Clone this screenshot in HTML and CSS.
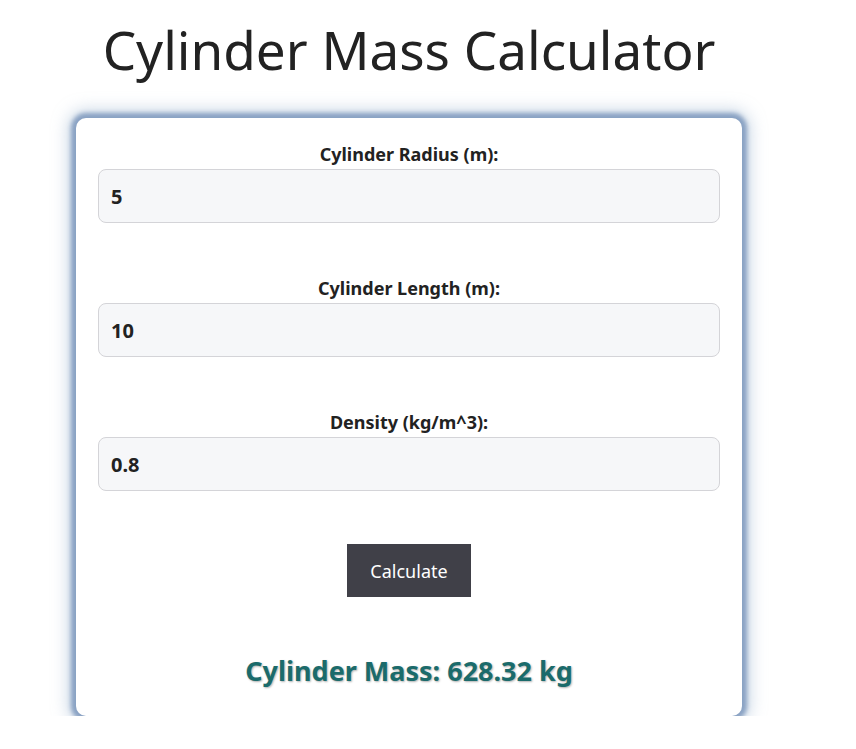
FILE: index.html
```html
<!DOCTYPE html>
<html lang="en">
<head>
    <meta charset="UTF-8">
    <meta name="viewport" content="width=device-width, initial-scale=1.0">
    <title>Cylinder Mass Calculator</title>
    <link rel="stylesheet" href="styles.css">
</head>
<body>
    <div class="container">
        <h1>Cylinder Mass Calculator</h1>

        <div class="card">
            <form id="massForm">
                <div class="form-group">
                    <label for="radius">Cylinder Radius (m):</label>
                    <input type="number" id="radius" step="any" value="5">
                </div>

                <div class="form-group">
                    <label for="length">Cylinder Length (m):</label>
                    <input type="number" id="length" step="any" value="10">
                </div>

                <div class="form-group">
                    <label for="density">Density (kg/m^3):</label>
                    <input type="number" id="density" step="any" value="0.8">
                </div>

                <button type="submit" class="btn">Calculate</button>
            </form>

            <div id="result" class="result">Cylinder Mass: 628.32 kg</div>
        </div>
    </div>

    <script>
        document.getElementById('massForm').addEventListener('submit', function(e) {
            e.preventDefault();

            const r = parseFloat(document.getElementById('radius').value);
            const l = parseFloat(document.getElementById('length').value);
            const d = parseFloat(document.getElementById('density').value);

            if (isNaN(r) || isNaN(l) || isNaN(d)) {
                document.getElementById('result').textContent = 'Please enter valid numbers';
                return;
            }

            // massa = pi * r^2 * l * densidade
            const mass = Math.PI * r * r * l * d;
            document.getElementById('result').textContent = 'Cylinder Mass: ' + mass.toFixed(2) + ' kg';
        });
    </script>
</body>
</html>
```

FILE: styles.css
```css
* {
    margin: 0;
    padding: 0;
    box-sizing: border-box;
}

body {
    font-family: 'Noto Sans', 'Open Sans', sans-serif;
    background: white;
    color: #222;
}

.container {
    width: 666px;
    margin-left: 76px;
    padding-top: 10px;
}

h1 {
    font-size: 53px;
    font-weight: normal;
    text-align: center;
    line-height: 80px;
    margin-bottom: 28px;
    color: #222;
}

.card {
    background: white;
    border-radius: 10px;
    padding: 25px 22px 27px;
    box-shadow: 0 0 4px 5px rgba(125,152,188,0.85), 0 0 16px 8px rgba(150,175,205,0.5);
}

.form-group {
    margin-bottom: 54px;
}

label {
    display: block;
    text-align: center;
    font-weight: bold;
    font-size: 18px;
    line-height: 22px;
    margin-bottom: 4px;
    color: #222;
}

input {
    width: 100%;
    height: 54px;
    padding: 0 12px;
    border: 1px solid #d4d4d8;
    border-radius: 8px;
    background: #f6f7f9;
    font-family: inherit;
    font-size: 20px;
    font-weight: bold;
    color: #222;
}

input:focus {
    outline: none;
    border-color: #999;
}

input::-webkit-outer-spin-button,
input::-webkit-inner-spin-button {
    -webkit-appearance: none;
    margin: 0;
}

.btn {
    display: block;
    margin: -1px auto 0;
    width: 124px;
    height: 53px;
    background: #404048;
    color: white;
    border: none;
    font-family: inherit;
    font-size: 18px;
    cursor: pointer;
}

.result {
    margin-top: 56px;
    text-align: center;
    font-size: 27px;
    font-weight: bold;
    line-height: 36px;
    color: #1b6b6b;
    text-shadow: 1px 1px 2px rgba(0,0,0,0.3);
}
```
